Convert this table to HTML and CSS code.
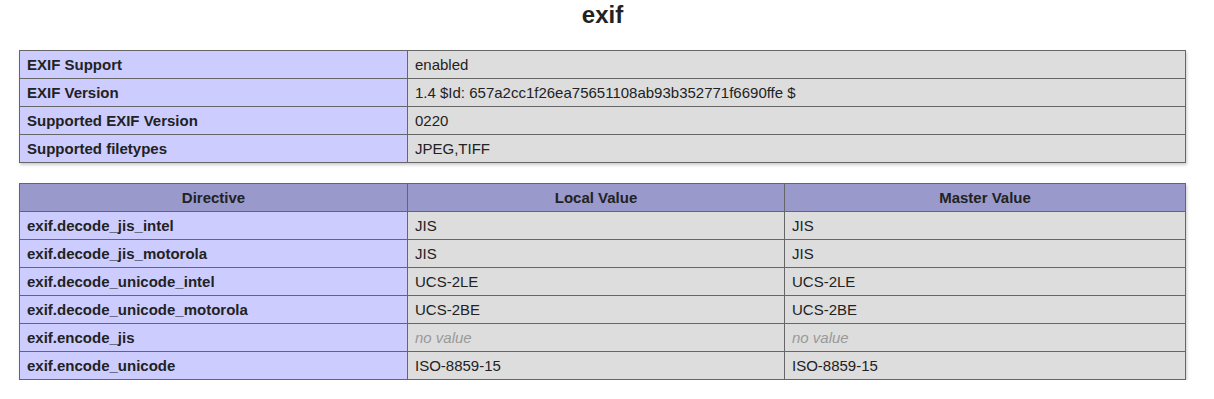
FILE: index.html
```html
<!DOCTYPE html>
<html lang="en">
<head>
<meta charset="utf-8">
<title>exif</title>
<link rel="stylesheet" href="styles.css">
</head>
<body>
<div class="center">
  <h2 class="section-title">exif</h2>
  <table class="info info-two">
    <colgroup><col class="c-name"><col class="c-rest"></colgroup>
    <tr><td class="e">EXIF Support</td><td class="v">enabled</td></tr>
    <tr><td class="e">EXIF Version</td><td class="v">1.4 $Id: 657a2cc1f26ea75651108ab93b352771f6690ffe $</td></tr>
    <tr><td class="e">Supported EXIF Version</td><td class="v">0220</td></tr>
    <tr><td class="e">Supported filetypes</td><td class="v">JPEG,TIFF</td></tr>
  </table>
  <table class="info info-three">
    <colgroup><col class="c-name"><col class="c-local"><col class="c-master"></colgroup>
    <tr class="h"><th>Directive</th><th>Local Value</th><th>Master Value</th></tr>
    <tr><td class="e">exif.decode_jis_intel</td><td class="v">JIS</td><td class="v">JIS</td></tr>
    <tr><td class="e">exif.decode_jis_motorola</td><td class="v">JIS</td><td class="v">JIS</td></tr>
    <tr><td class="e">exif.decode_unicode_intel</td><td class="v">UCS-2LE</td><td class="v">UCS-2LE</td></tr>
    <tr><td class="e">exif.decode_unicode_motorola</td><td class="v">UCS-2BE</td><td class="v">UCS-2BE</td></tr>
    <tr><td class="e">exif.encode_jis</td><td class="v"><i>no value</i></td><td class="v"><i>no value</i></td></tr>
    <tr><td class="e">exif.encode_unicode</td><td class="v">ISO-8859-15</td><td class="v">ISO-8859-15</td></tr>
  </table>
</div>
</body>
</html>
```

FILE: styles.css
```css
body {
  margin: 0;
  background-color: #fff;
  color: #222;
  font-family: "Liberation Sans", Arial, sans-serif;
}

.center {
  padding: 1px 28px 0 19px;
}

.section-title {
  margin: 0;
  text-align: center;
  font-size: 24px;
  line-height: 28px;
  font-weight: bold;
}

.info {
  border-collapse: collapse;
  table-layout: fixed;
  width: 1166px;
  box-shadow: 1px 2px 3px #ccc;
  text-align: left;
}

.info-two {
  margin-top: 21px;
}

.info-three {
  margin-top: 20px;
}

.c-name { width: 388px; }
.c-rest { width: 778px; }
.c-local { width: 377px; }
.c-master { width: 401px; }

.info td,
.info th {
  border: 1px solid #666;
  font-size: 15px;
  line-height: 17px;
  padding: 5px 7px;
  vertical-align: baseline;
}

.info th {
  text-align: center;
}

.e {
  background-color: #ccf;
  font-weight: bold;
}

.h {
  background-color: #99c;
  font-weight: bold;
}

.v {
  background-color: #ddd;
  word-wrap: break-word;
}

.v i {
  color: #999;
}
```
